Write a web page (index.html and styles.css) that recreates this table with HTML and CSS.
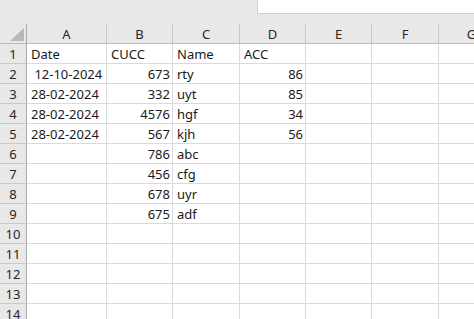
FILE: index.html
```html
<!DOCTYPE html>
<html>
<head>
<meta charset="utf-8">
<link rel="stylesheet" href="styles.css">
</head>
<body>
<div class="topbar"><div class="spacer"></div><div class="formula"></div></div>
<div class="sheet">
  <div class="corner"><svg class="tri" width="14" height="13" viewBox="0 0 14 13"><polygon points="0,13 14,0 14,13" fill="#b9b9b9"/></svg></div>
  <div class="ch">A</div><div class="ch">B</div><div class="ch">C</div><div class="ch">D</div><div class="ch">E</div><div class="ch">F</div><div class="ch">G</div>

  <div class="rh">1</div><div class="c">Date</div><div class="c">CUCC</div><div class="c">Name</div><div class="c">ACC</div><div class="c"></div><div class="c"></div><div class="c"></div>
  <div class="rh">2</div><div class="c">&nbsp;12-10-2024</div><div class="c n">673</div><div class="c">rty</div><div class="c n">86</div><div class="c"></div><div class="c"></div><div class="c"></div>
  <div class="rh">3</div><div class="c">28-02-2024</div><div class="c n">332</div><div class="c">uyt</div><div class="c n">85</div><div class="c"></div><div class="c"></div><div class="c"></div>
  <div class="rh">4</div><div class="c">28-02-2024</div><div class="c n">4576</div><div class="c">hgf</div><div class="c n">34</div><div class="c"></div><div class="c"></div><div class="c"></div>
  <div class="rh">5</div><div class="c">28-02-2024</div><div class="c n">567</div><div class="c">kjh</div><div class="c n">56</div><div class="c"></div><div class="c"></div><div class="c"></div>
  <div class="rh">6</div><div class="c"></div><div class="c n">786</div><div class="c">abc</div><div class="c"></div><div class="c"></div><div class="c"></div><div class="c"></div>
  <div class="rh">7</div><div class="c"></div><div class="c n">456</div><div class="c">cfg</div><div class="c"></div><div class="c"></div><div class="c"></div><div class="c"></div>
  <div class="rh">8</div><div class="c"></div><div class="c n">678</div><div class="c">uyr</div><div class="c"></div><div class="c"></div><div class="c"></div><div class="c"></div>
  <div class="rh">9</div><div class="c"></div><div class="c n">675</div><div class="c">adf</div><div class="c"></div><div class="c"></div><div class="c"></div><div class="c"></div>
  <div class="rh">10</div><div class="c"></div><div class="c"></div><div class="c"></div><div class="c"></div><div class="c"></div><div class="c"></div><div class="c"></div>
  <div class="rh">11</div><div class="c"></div><div class="c"></div><div class="c"></div><div class="c"></div><div class="c"></div><div class="c"></div><div class="c"></div>
  <div class="rh">12</div><div class="c"></div><div class="c"></div><div class="c"></div><div class="c"></div><div class="c"></div><div class="c"></div><div class="c"></div>
  <div class="rh">13</div><div class="c"></div><div class="c"></div><div class="c"></div><div class="c"></div><div class="c"></div><div class="c"></div><div class="c"></div>
  <div class="rh">14</div><div class="c"></div><div class="c"></div><div class="c"></div><div class="c"></div><div class="c"></div><div class="c"></div><div class="c"></div>
</div>
</body>
</html>
```

FILE: styles.css
```css
html, body {
  margin: 0;
  padding: 0;
  background: #ffffff;
  overflow: hidden;
}
body {
  width: 474px;
  height: 319px;
  font-family: "Noto Sans", "Open Sans", sans-serif;
  font-size: 13px;
  color: #1a1a1a;
}
.topbar {
  display: flex;
  height: 24px;
  background: #e8e8e8;
}
.spacer {
  width: 257px;
}
.formula {
  flex: 1;
  height: 13px;
  background: #ffffff;
  border-left: 1px solid #d2d2d2;
  border-bottom: 1px solid #d2d2d2;
}
.sheet {
  display: grid;
  width: 505px;
  grid-template-columns: 27px 80px 66px 67px 66px 66px 67px 66px;
  grid-auto-rows: 20px;
}
.sheet > div {
  box-sizing: border-box;
  border-right: 1px solid #dadada;
  border-bottom: 1px solid #dadada;
  white-space: pre;
  overflow: hidden;
  line-height: 20px;
}
.corner {
  background: #e8e8e8;
  position: relative;
  border-right-color: #a9a9a9 !important;
  border-bottom-color: #bdbdbd !important;
}
.tri {
  position: absolute;
  right: 2px;
  bottom: 2px;
}
.sheet > .ch {
  background: #e8e8e8;
  text-align: center;
  color: #262626;
  border-right-color: #c8c8c8;
  border-bottom-color: #bdbdbd;
}
.sheet > .rh {
  background: #e8e8e8;
  text-align: center;
  color: #262626;
  border-right-color: #a9a9a9;
  border-bottom-color: #c8c8c8;
}
.c {
  padding: 0 3px 0 4px;
}
.sheet > .n {
  text-align: right;
  padding-right: 2px;
}
```
